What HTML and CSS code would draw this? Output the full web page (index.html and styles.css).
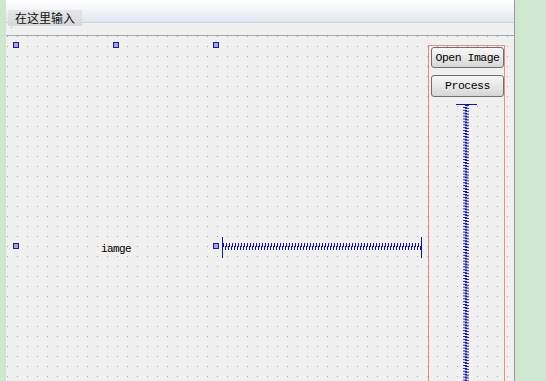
FILE: index.html
```html
<!DOCTYPE html>
<html lang="zh">
  <head>
    <meta charset="UTF-8" />
    <title>Form Designer</title>
    <link rel="stylesheet" href="styles.css">
  </head>
  <body>
    <div class="window">
      <div class="menubar">
        <span class="menu-item">在这里输入</span>
      </div>
      <div class="toolbar"><span class="grip"></span></div>
      <div class="canvas">
        <span class="handle" style="left:7px;top:6px"></span>
        <span class="handle" style="left:107px;top:6px"></span>
        <span class="handle" style="left:207px;top:6px"></span>
        <span class="handle" style="left:7px;top:207px"></span>
        <span class="handle" style="left:207px;top:207px"></span>

        <span class="label">iamge</span>

        <svg class="hspacer" width="201" height="21" viewBox="0 0 201 21" shape-rendering="crispEdges">
          <defs>
            <pattern id="zigH" width="3" height="21" patternUnits="userSpaceOnUse">
              <rect x="0" y="9" width="1" height="4" fill="#14149a" />
              <rect x="1" y="6" width="1" height="4" fill="#14149a" />
            </pattern>
          </defs>
          <rect x="1" y="0" width="199" height="21" fill="url(#zigH)" />
          <rect x="0" y="0" width="1" height="21" fill="#14149a" />
          <rect x="199" y="0" width="1" height="21" fill="#14149a" />
        </svg>

        <div class="vlayout">
          <button class="btn">Open Image</button>
          <button class="btn">Process</button>
          <svg class="vspacer" width="21" height="290" viewBox="0 0 21 290" shape-rendering="crispEdges">
            <defs>
              <pattern id="zigV" width="21" height="3" patternUnits="userSpaceOnUse">
                <rect x="7" y="0" width="4" height="1" fill="#14149a" />
                <rect x="9" y="1" width="4" height="1" fill="#14149a" />
              </pattern>
            </defs>
            <rect x="0" y="1" width="21" height="289" fill="url(#zigV)" />
            <rect x="0" y="0" width="21" height="1" fill="#14149a" />
          </svg>
        </div>
      </div>
    </div>
  </body>
</html>
```
FILE: styles.css
```css
body {
  margin: 0;
  background: #cfe7cf;
  font-family: "Noto Sans CJK SC", sans-serif;
  overflow: hidden;
}
.window {
  margin-left: 6px;
  width: 508px;
  height: 381px;
  border-right: 1px solid #9a9a9a;
  background: #f0f0f0;
  display: flex;
  flex-direction: column;
}
.menubar {
  height: 23px;
  box-sizing: border-box;
  border-bottom: 1px solid #cfd3da;
  background: linear-gradient(#ffffff, #f4f6fa 40%, #dfe5ef);
  padding: 4px 0 0 2px;
}
.menu-item {
  display: inline-block;
  height: 16px;
  line-height: 16px;
  padding: 0 7px;
  font-size: 12px;
  color: #111;
  background: linear-gradient(#e6e6e6, #d6d8dc);
}
.toolbar {
  height: 12px;
  border-bottom: 1px solid #a8a8a8;
  position: relative;
}
.grip {
  position: absolute;
  left: 5px;
  top: 4px;
  width: 1px;
  height: 1px;
  background: #b0b0b0;
}
.canvas {
  flex: 1;
  position: relative;
  background-color: #f0f0f0;
  background-image: conic-gradient(from 270deg at 1px 1px, #a4a4a4 90deg, transparent 0);
  background-size: 10px 10px;
  background-position: 1px 0;
}
.handle {
  position: absolute;
  width: 4px;
  height: 4px;
  border: 1px solid #1c1c9a;
  background: #a4a4dc;
}
.label {
  position: absolute;
  left: 95px;
  top: 207px;
  font-family: "Liberation Mono", monospace;
  font-size: 11px;
  letter-spacing: -0.6px;
  line-height: 12px;
  color: #000;
}
.hspacer {
  position: absolute;
  left: 216px;
  top: 201px;
}
.vlayout {
  position: absolute;
  left: 422px;
  top: 9px;
  width: 77px;
  height: 340px;
  border: 1px solid #e38a8a;
  display: flex;
  flex-direction: column;
  align-items: flex-start;
  padding: 1px 0 0 2px;
  box-sizing: border-box;
}
.btn {
  width: 73px;
  height: 22px;
  margin-bottom: 7px;
  border: 1px solid #707070;
  border-radius: 3px;
  background: linear-gradient(#f6f6f6, #e8e8e8 50%, #d6d6d6);
  font-family: "Liberation Mono", monospace;
  font-size: 11.5px;
  letter-spacing: -0.5px;
  color: #000;
  padding: 0;
}
.vspacer {
  margin-left: 25px;
  margin-top: 0;
}
```
